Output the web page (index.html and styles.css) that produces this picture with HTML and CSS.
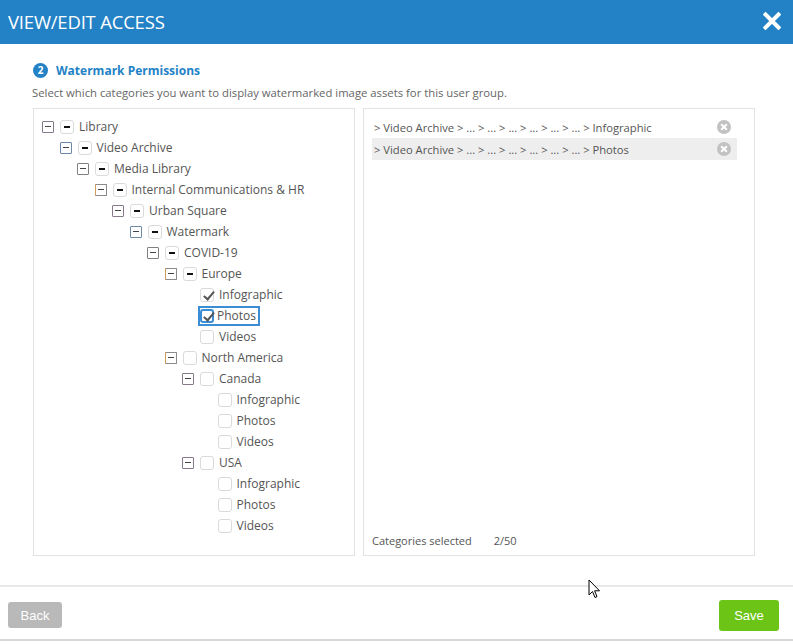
FILE: index.html
```html
<!DOCTYPE html>
<html>
<head>
<meta charset="utf-8">
<link rel="stylesheet" href="styles.css">
</head>
<body>
<div class="modal">
  <div class="header">
    <div class="title">VIEW/EDIT ACCESS</div>
    <svg class="close" width="18" height="18" viewBox="0 0 18 18"><path d="M2.5 2.5 L15.5 15.5 M15.5 2.5 L2.5 15.5" stroke="#fff" stroke-width="4" stroke-linecap="square"/></svg>
  </div>
  <div class="body">
    <div class="step"><span class="step-num">2</span><span class="step-title">Watermark Permissions</span></div>
    <div class="desc">Select which categories you want to display watermarked image assets for this user group.</div>
    <div class="panels">
      <div class="panel tree-panel">
        <ul class="tree">
          <li><div class="row"><span class="tog t-purple"></span><span class="cb part"></span><span class="lbl">Library</span></div>
          <ul><li><div class="row"><span class="tog t-blue"></span><span class="cb part"></span><span class="lbl">Video Archive</span></div>
          <ul><li><div class="row"><span class="tog"></span><span class="cb part"></span><span class="lbl">Media Library</span></div>
          <ul><li><div class="row"><span class="tog t-orange"></span><span class="cb part"></span><span class="lbl">Internal Communications &amp; HR</span></div>
          <ul><li><div class="row"><span class="tog t-purple"></span><span class="cb part"></span><span class="lbl">Urban Square</span></div>
          <ul><li><div class="row"><span class="tog t-blue"></span><span class="cb part"></span><span class="lbl">Watermark</span></div>
          <ul><li><div class="row"><span class="tog"></span><span class="cb part"></span><span class="lbl">COVID-19</span></div>
            <ul>
              <li><div class="row"><span class="tog t-orange"></span><span class="cb part"></span><span class="lbl">Europe</span></div>
                <ul>
                  <li><div class="row"><span class="sp"></span><span class="cb chk"></span><span class="lbl">Infographic</span></div></li>
                  <li><div class="row"><span class="sp"></span><span class="focus"><span class="cb chk foc"></span><span class="lbl">Photos</span></span></div></li>
                  <li><div class="row"><span class="sp"></span><span class="cb"></span><span class="lbl">Videos</span></div></li>
                </ul>
              </li>
              <li><div class="row"><span class="tog t-orange"></span><span class="cb"></span><span class="lbl">North America</span></div>
                <ul>
                  <li><div class="row"><span class="tog t-purple"></span><span class="cb"></span><span class="lbl">Canada</span></div>
                    <ul>
                      <li><div class="row"><span class="sp"></span><span class="cb"></span><span class="lbl">Infographic</span></div></li>
                      <li><div class="row"><span class="sp"></span><span class="cb"></span><span class="lbl">Photos</span></div></li>
                      <li><div class="row"><span class="sp"></span><span class="cb"></span><span class="lbl">Videos</span></div></li>
                    </ul>
                  </li>
                  <li><div class="row"><span class="tog t-purple"></span><span class="cb"></span><span class="lbl">USA</span></div>
                    <ul>
                      <li><div class="row"><span class="sp"></span><span class="cb"></span><span class="lbl">Infographic</span></div></li>
                      <li><div class="row"><span class="sp"></span><span class="cb"></span><span class="lbl">Photos</span></div></li>
                      <li><div class="row"><span class="sp"></span><span class="cb"></span><span class="lbl">Videos</span></div></li>
                    </ul>
                  </li>
                </ul>
              </li>
            </ul>
          </li></ul>
          </li></ul>
          </li></ul>
          </li></ul>
          </li></ul>
          </li></ul>
          </li>
        </ul>
      </div>
      <div class="panel sel-panel">
        <div class="sel-list">
          <div class="sel-row"><span>&gt; Video Archive &gt; ... &gt; ... &gt; ... &gt; ... &gt; ... &gt; ... &gt; Infographic</span><span class="rm"></span></div>
          <div class="sel-row hl"><span>&gt; Video Archive &gt; ... &gt; ... &gt; ... &gt; ... &gt; ... &gt; ... &gt; Photos</span><span class="rm"></span></div>
        </div>
        <div class="count"><span>Categories selected</span><span class="num">2/50</span></div>
      </div>
    </div>
  </div>
  <div class="footer">
    <button class="btn back">Back</button>
    <button class="btn save">Save</button>
  </div>
  <div class="under"></div>
  <svg class="cursor" width="13" height="20" viewBox="0 0 13 20"><path d="M1 1 L1 16 L4.5 12.5 L7 18.5 L9 17.6 L6.6 11.8 L11.5 11.8 Z" fill="#fff" stroke="#000" stroke-width="1"/></svg>
</div>
</body>
</html>
```
FILE: styles.css
```css
* { box-sizing: border-box; }
html, body { margin: 0; padding: 0; }
body {
  width: 793px;
  height: 644px;
  overflow: hidden;
  background: #fff;
  font-family: "Open Sans", "Liberation Sans", sans-serif;
  color: #555;
}
.modal { position: relative; height: 644px; }
.header {
  height: 44px;
  background: #2382c6;
  display: flex;
  align-items: center;
  justify-content: space-between;
  padding: 0 12px 2px 8px;
}
.title {
  color: #fff;
  font-size: 18.5px;
  letter-spacing: -0.2px;
}
.body { padding: 18px 38px 0 32px; }
.step { display: flex; align-items: center; height: 16px; }
.step-num {
  width: 15px; height: 15px;
  border-radius: 50%;
  background: #2382c6;
  color: #fff;
  font-size: 10px;
  font-weight: 700;
  display: flex; align-items: center; justify-content: center;
  margin: 0 8px 0 1px;
}
.step-title { color: #2382c6; font-weight: 700; font-size: 12px; }
.desc { font-size: 11.3px; color: #666; margin-top: 7px; height: 15px; line-height: 15px; }
.panels { display: flex; gap: 8px; margin-top: 8px; margin-left: 1px; }
.panel {
  border: 1px solid #e3e3e3;
  height: 448px;
}
.tree-panel { width: 322px; padding: 7px 0 0 8px; }
.sel-panel { width: 392px; padding: 7px 17px 0 8px; display: flex; flex-direction: column; }
ul { list-style: none; margin: 0; padding: 0; }
.tree ul { padding-left: 17.5px; }
.row { display: flex; align-items: center; height: 21px; font-size: 12px; }
.tog {
  width: 12px; height: 12px;
  border: 1px solid #808080;
  border-radius: 1px;
  position: relative;
  margin-right: 6px;
  flex: none;
}
.tog::after {
  content: "";
  position: absolute;
  left: 2px; right: 2px; top: 4.5px;
  height: 1px;
  background: #444;
}
.t-purple { border-color: #857a8c; }
.t-blue { border-color: #6c89a8; }
.t-orange { border-color: #8a8a8a; border-left-color: #d39a5a; }
.sp { width: 18px; flex: none; }
.cb {
  width: 14px; height: 14px;
  border: 1px solid #dadada;
  border-radius: 3px;
  background: #fff;
  position: relative;
  margin-right: 5px;
  flex: none;
}
.cb.part::after {
  content: "";
  position: absolute;
  left: 3px; width: 6px; top: 5px; height: 2px;
  background: #111;
}
.cb.chk::after {
  content: "";
  position: absolute;
  left: 4.5px; top: 0px;
  width: 4px; height: 9px;
  border-right: 2px solid #555;
  border-bottom: 2px solid #555;
  transform: rotate(40deg);
}
.cb.foc { border: 2px solid #3c8ed4; }
.cb.foc::after { left: 3.5px; top: -1px; }
.lbl { white-space: nowrap; color: #555; }
.focus {
  display: flex; align-items: center;
  border: 2px solid #3c8ed4;
  height: 20px;
  margin-left: -2px;
  padding-right: 2px;
}
.focus .cb { margin-right: 3px; }
.sel-list { flex: 1; }
.sel-row {
  display: flex; align-items: center; justify-content: space-between;
  height: 22px;
  font-size: 11.2px;
  color: #555;
  padding: 0 6px 0 2px;
}
.sel-row.hl { background: #eeeeee; }
.rm {
  width: 14px; height: 14px;
  border-radius: 50%;
  background: #c2c2c2;
  position: relative;
}
.rm::before, .rm::after {
  content: "";
  position: absolute;
  left: 3px; top: 6px;
  width: 8px; height: 2px;
  background: #fff;
  transform: rotate(45deg);
}
.rm::after { transform: rotate(-45deg); }
.count { font-size: 11px; color: #555; height: 20px; margin-bottom: 2px; display: flex; }
.num { margin-left: 22px; }
.footer {
  margin-top: 29px;
  border-top: 2px solid #e8e8e8;
  height: 54px;
  display: flex;
  justify-content: space-between;
  align-items: center;
  padding: 4px 14px 0 8px;
}
.btn {
  border: none;
  color: #fff;
  font-family: "Liberation Sans", sans-serif;
  font-size: 13px;
  border-radius: 3px;
}
.back { background: #b9b9b9; width: 54px; height: 26px; }
.save { background: #6cc417; width: 60px; height: 31px; }
.under { border-top: 2px solid #d8d8d8; }
.cursor { position: absolute; left: 588px; top: 579px; }
```
